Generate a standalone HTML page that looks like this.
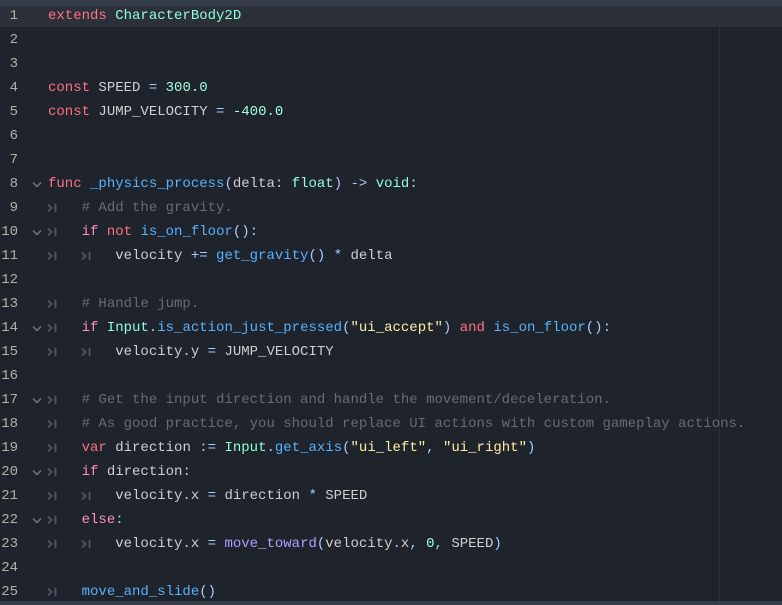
<!DOCTYPE html>
<html><head><style>
body{margin:0;width:782px;height:605px;background:#1f232b;overflow:hidden;position:relative;font-family:"Liberation Mono",monospace;font-size:14px;}
.top{position:absolute;left:0;top:0;width:782px;height:6px;background:#363d4a}
.bot{position:absolute;left:0;top:601px;width:782px;height:4px;background:#363d4a}
.hl{position:absolute;left:0;top:6px;width:782px;height:21px;background:#2c3038}
.vl{position:absolute;left:719px;top:6px;width:1px;height:595px;background:#2c3038}
.row{position:absolute;left:0;height:24px;line-height:24px;white-space:pre;width:782px}
.num{position:absolute;left:0;width:18px;text-align:right;color:#a9b5a6}
.code{position:absolute;left:48px;color:#cdcfd2}
.f{position:absolute;left:32px;top:9px;width:10px;height:7px}
.t{position:absolute;left:47px;top:8px;width:10px;height:8px}
.t2{position:absolute;left:81px;top:8px;width:10px;height:8px}
.k{color:#ff7085}.c{color:#8fffdb}.n{color:#a1ffe0}.o{color:#abc9ff}.fn{color:#57b2ff}.cm{color:#676b72}.s{color:#ffeda1}.cf{color:#ff8ccc}
</style></head><body>
<svg width="0" height="0" style="position:absolute"><defs>
<symbol id="fo" viewBox="0 0 10 7"><path d="M1 1.5 L5 5.5 L9 1.5" fill="none" stroke="#666d78" stroke-width="1.6"/></symbol>
<symbol id="tb" viewBox="0 0 10 8"><path d="M1 0.5 L4.5 4 L1 7.5" fill="none" stroke="#4f5663" stroke-width="1.8"/><path d="M8.5 0 V8" stroke="#4f5663" stroke-width="1.8"/></symbol>
</defs></svg>
<div class="top"></div><div class="hl"></div><div class="vl"></div><div class="bot"></div>
<div class="row" style="top:4px"><span class="num">1</span><span class="code"><span class="k">extends</span> <span class="c">CharacterBody2D</span></span></div>
<div class="row" style="top:28px"><span class="num">2</span></div>
<div class="row" style="top:52px"><span class="num">3</span></div>
<div class="row" style="top:76px"><span class="num">4</span><span class="code"><span class="k">const</span> SPEED <span class="o">=</span> <span class="n">300.0</span></span></div>
<div class="row" style="top:100px"><span class="num">5</span><span class="code"><span class="k">const</span> JUMP_VELOCITY <span class="o">=</span> <span class="n">-400.0</span></span></div>
<div class="row" style="top:124px"><span class="num">6</span></div>
<div class="row" style="top:148px"><span class="num">7</span></div>
<div class="row" style="top:172px"><span class="num">8</span><svg class="f"><use href="#fo"/></svg><span class="code"><span class="k">func</span> <span class="fn">_physics_process</span><span class="o">(</span>delta<span class="o">:</span> <span class="c">float</span><span class="o">)</span> <span class="o">-&gt;</span> <span class="c">void</span><span class="o">:</span></span></div>
<div class="row" style="top:196px"><span class="num">9</span><svg class="t"><use href="#tb"/></svg><span class="code">    <span class="cm"># Add the gravity.</span></span></div>
<div class="row" style="top:220px"><span class="num">10</span><svg class="f"><use href="#fo"/></svg><svg class="t"><use href="#tb"/></svg><span class="code">    <span class="cf">if</span> <span class="k">not</span> <span class="fn">is_on_floor</span><span class="o">():</span></span></div>
<div class="row" style="top:244px"><span class="num">11</span><svg class="t"><use href="#tb"/></svg><svg class="t2"><use href="#tb"/></svg><span class="code">        velocity <span class="o">+=</span> <span class="fn">get_gravity</span><span class="o">()</span> <span class="o">*</span> delta</span></div>
<div class="row" style="top:268px"><span class="num">12</span></div>
<div class="row" style="top:292px"><span class="num">13</span><svg class="t"><use href="#tb"/></svg><span class="code">    <span class="cm"># Handle jump.</span></span></div>
<div class="row" style="top:316px"><span class="num">14</span><svg class="f"><use href="#fo"/></svg><svg class="t"><use href="#tb"/></svg><span class="code">    <span class="cf">if</span> <span class="c">Input</span><span class="o">.</span><span class="fn">is_action_just_pressed</span><span class="o">(</span><span class="s">"ui_accept"</span><span class="o">)</span> <span class="k">and</span> <span class="fn">is_on_floor</span><span class="o">():</span></span></div>
<div class="row" style="top:340px"><span class="num">15</span><svg class="t"><use href="#tb"/></svg><svg class="t2"><use href="#tb"/></svg><span class="code">        velocity<span class="o">.</span>y <span class="o">=</span> JUMP_VELOCITY</span></div>
<div class="row" style="top:364px"><span class="num">16</span></div>
<div class="row" style="top:388px"><span class="num">17</span><svg class="f"><use href="#fo"/></svg><svg class="t"><use href="#tb"/></svg><span class="code">    <span class="cm"># Get the input direction and handle the movement/deceleration.</span></span></div>
<div class="row" style="top:412px"><span class="num">18</span><svg class="t"><use href="#tb"/></svg><span class="code">    <span class="cm"># As good practice, you should replace UI actions with custom gameplay actions.</span></span></div>
<div class="row" style="top:436px"><span class="num">19</span><svg class="t"><use href="#tb"/></svg><span class="code">    <span class="k">var</span> direction <span class="o">:=</span> <span class="c">Input</span><span class="o">.</span><span class="fn">get_axis</span><span class="o">(</span><span class="s">"ui_left"</span><span class="o">,</span> <span class="s">"ui_right"</span><span class="o">)</span></span></div>
<div class="row" style="top:460px"><span class="num">20</span><svg class="f"><use href="#fo"/></svg><svg class="t"><use href="#tb"/></svg><span class="code">    <span class="cf">if</span> direction<span class="o">:</span></span></div>
<div class="row" style="top:484px"><span class="num">21</span><svg class="t"><use href="#tb"/></svg><svg class="t2"><use href="#tb"/></svg><span class="code">        velocity<span class="o">.</span>x <span class="o">=</span> direction <span class="o">*</span> SPEED</span></div>
<div class="row" style="top:508px"><span class="num">22</span><svg class="f"><use href="#fo"/></svg><svg class="t"><use href="#tb"/></svg><span class="code">    <span class="cf">else</span><span class="o">:</span></span></div>
<div class="row" style="top:532px"><span class="num">23</span><svg class="t"><use href="#tb"/></svg><svg class="t2"><use href="#tb"/></svg><span class="code">        velocity<span class="o">.</span>x <span class="o">=</span> <span style="color:#b39dff">move_toward</span><span class="o">(</span>velocity<span class="o">.</span>x<span class="o">,</span> <span class="n">0</span><span class="o">,</span> SPEED<span class="o">)</span></span></div>
<div class="row" style="top:556px"><span class="num">24</span></div>
<div class="row" style="top:580px"><span class="num">25</span><svg class="t"><use href="#tb"/></svg><span class="code">    <span class="fn">move_and_slide</span><span class="o">()</span></span></div>
</body></html>
